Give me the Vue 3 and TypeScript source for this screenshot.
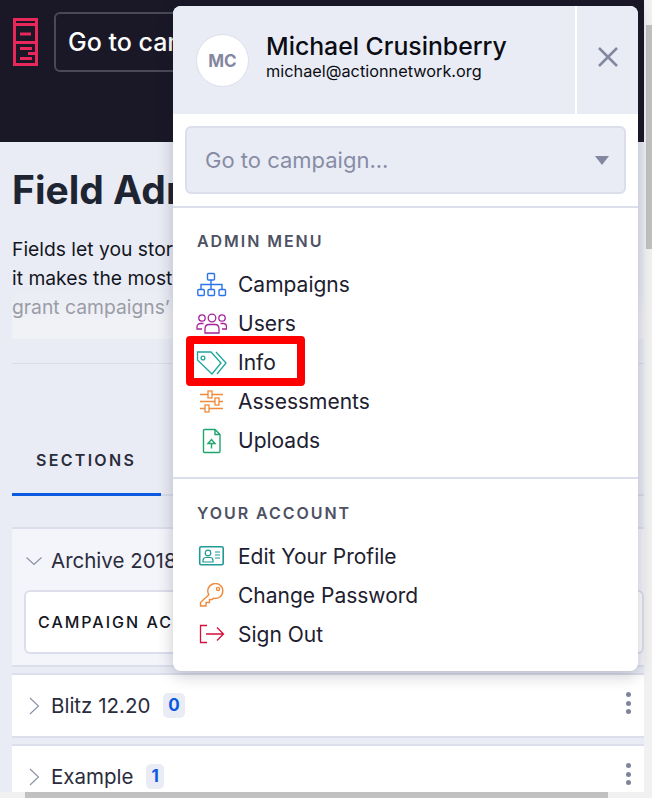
<script setup lang="ts">
interface Row { label: string; count: number }
const rows: Row[] = [
  { label: 'Blitz 12.20', count: 0 },
  { label: 'Example', count: 1 },
]
</script>

<template>
  <div class="screen">
    <div class="page">
      <header class="topbar">
        <svg class="logo" width="25" height="48" viewBox="0 0 25 48" fill="none" stroke="#e8275a" stroke-width="3">
          <rect x="1.500" y="1.500" width="22" height="45" />
          <path d="M1 6.500H24M7 16H18M1 24.500H24M7 30.500H19M15 35.500H24M7 40.500H19" />
        </svg>
        <div class="top-select">Go to campaign...</div>
      </header>
      <main class="content">
        <h1>Field Administration</h1>
        <div class="intro">
          <p>Fields let you store data about your campaigns,</p>
          <p>it makes the most of your information, and lets you</p>
          <p class="fade">grant campaigns’ access to the right data</p>
        </div>
        <hr class="rule" />
        <div class="tabs"><div class="tab">SECTIONS</div></div>
        <section class="acc open">
          <div class="acc-head">
            <svg class="chev" width="16" height="16" viewBox="0 0 16 16" fill="none"><path d="M.5 4.500L8 11.500L15.500 4.500" stroke="#8a8fa8" stroke-width="1.100" /></svg>
            <span class="acc-title">Archive 2018</span>
          </div>
          <div class="inner-card">CAMPAIGN ACTIONS</div>
        </section>
        <section v-for="r in rows" :key="r.label" class="acc">
          <div class="acc-head">
            <svg class="chev" width="16" height="18" viewBox="0 0 16 18" fill="none"><path d="M4 1L12.500 9L4 17" stroke="#8a8fa8" stroke-width="1.100" /></svg>
            <span class="acc-title">{{ r.label }}</span>
            <span class="badge">{{ r.count }}</span>
            <span class="kebab"><i></i><i></i><i></i></span>
          </div>
        </section>
      </main>
      <div class="hscroll"><div class="hthumb"></div></div>
    </div>
    <div class="vscroll"><div class="vthumb"></div></div>

    <aside class="panel">
      <div class="panel-head">
        <div class="user">
          <div class="avatar">MC</div>
          <div class="who">
            <div class="name">Michael Crusinberry</div>
            <div class="email">michael@actionnetwork.org</div>
          </div>
        </div>
        <button class="close" aria-label="Close">
          <svg width="20" height="20" viewBox="0 0 20 20" fill="none"><path d="M1 1L19 19M19 1L1 19" stroke="#83879f" stroke-width="2.500" /></svg>
        </button>
      </div>
      <div class="panel-select-wrap">
        <div class="panel-select">
          <span>Go to campaign...</span>
          <span class="caret"></span>
        </div>
      </div>
      <div class="menu-block first">
        <div class="menu-title">ADMIN MENU</div>
        <ul>
          <li>
            <svg width="32" height="26" viewBox="0 0 32 26" fill="none" stroke="#2a74ea" stroke-width="1.400">
              <rect x="12.500" y="1.500" width="7" height="6.500" rx="1" /><rect x="2.800" y="17.500" width="6.500" height="6" rx="1" /><rect x="13" y="17.500" width="6.500" height="6" rx="1" /><rect x="24" y="17.500" width="6.500" height="6" rx="1" />
              <path d="M16 8V17.500M6 17.500V12.500H27V17.500" />
            </svg>
            <span>Campaigns</span>
          </li>
          <li>
            <svg width="32" height="26" viewBox="0 0 32 26" fill="none" stroke="#a5249b" stroke-width="1.300">
              <circle cx="17" cy="7" r="3.800" /><circle cx="7" cy="7" r="3.200" /><circle cx="27" cy="7" r="3.200" />
              <path d="M10 22V18C10 15.500 11.500 13.500 14 13.500H20C22.500 13.500 24 15.500 24 18V22H10ZM8.500 12.500H5.500C3.500 12.500 2 14 2 16V18H7M25.500 12.500H28.500C30.500 12.500 31.500 14 31.500 16V18H27" />
            </svg>
            <span>Users</span>
          </li>
          <li class="hl">
            <svg width="32" height="26" viewBox="0 0 32 26" fill="none" stroke="#1fa59e" stroke-width="1.300">
              <path d="M2.500 2H16L26 13L17 24L2.500 10V2Z" /><circle cx="8" cy="8" r="1.900" /><path d="M21 2L31 13L22 24" />
            </svg>
            <span>Info</span>
          </li>
          <li>
            <svg width="32" height="26" viewBox="0 0 32 26" fill="none" stroke="#f08a3c" stroke-width="1.300">
              <path d="M5 5.500H28M5 12.500H28M5 19.500H28" /><rect x="13" y="2" width="4" height="7" fill="#fff" /><rect x="20" y="9" width="4" height="7" fill="#fff" /><rect x="10" y="16" width="4" height="7" fill="#fff" />
            </svg>
            <span>Assessments</span>
          </li>
          <li>
            <svg width="32" height="26" viewBox="0 0 32 26" fill="none" stroke="#1fa56e" stroke-width="1.400">
              <path d="M8.500 2.500Q8.500 1.500 9.500 1.500H20L25 6.500V23.500Q25 24.500 24 24.500H9.500Q8.500 24.500 8.500 23.500V2.500ZM20 1.500V6.500H25" /><path d="M16.500 20.500V15M13 15.500L16.500 11.500L20 15.500H13Z" />
            </svg>
            <span>Uploads</span>
          </li>
        </ul>
      </div>
      <div class="menu-block">
        <div class="menu-title">YOUR ACCOUNT</div>
        <ul>
          <li>
            <svg width="32" height="26" viewBox="0 0 32 26" fill="none" stroke="#1f9a94" stroke-width="1.200">
              <rect x="4.700" y="2.700" width="23.500" height="18" rx="1.500" stroke-width="1.600" /><circle cx="13" cy="9" r="2.800" /><path d="M8 18V16.500C8 14.500 9.500 13.500 11 13.500H15C16.500 13.500 18 14.500 18 16.500V18H8ZM20 8H25M20 11H25M20 14H25" />
            </svg>
            <span>Edit Your Profile</span>
          </li>
          <li>
            <svg width="32" height="26" viewBox="0 0 32 26" fill="none" stroke="#f08a3c" stroke-width="1.400">
              <path d="M13.800 11.700L5.500 19.500V23H11V19.500H14.500V16.500H17.500L18.300 15.200A7.500 7.500 0 1 0 13.800 11.700Z" /><circle cx="23" cy="6" r="1.600" />
            </svg>
            <span>Change Password</span>
          </li>
          <li>
            <svg width="32" height="26" viewBox="0 0 32 26" fill="none" stroke="#d8103a" stroke-width="1.300">
              <path d="M12 3.500H5.500V20.500H12M11 12H28M22 5.500L28.500 12L22 18.500" />
            </svg>
            <span>Sign Out</span>
          </li>
        </ul>
      </div>
    </aside>
  </div>
</template>

<style>
html, body { margin: 0; overflow: hidden; }
</style>

<style scoped>
.screen { position: relative; width: 652px; height: 798px; display: flex; overflow: hidden; font-family: Inter, Lato, sans-serif; color: #1d2030; background: #e9ecf4; }
.page { width: 644px; display: flex; flex-direction: column; height: 798px; }
.topbar { height: 142px; flex: none; background: #1a1827; display: flex; align-items: flex-start; padding: 12px 0 0 13px; box-sizing: border-box; overflow: hidden; }
.logo { margin-top: 6px; flex: none; }
.top-select { margin-left: 16px; width: 300px; height: 60px; flex: none; box-sizing: border-box; border: 2px solid #4a4955; border-radius: 6px; color: #fff; font-size: 25px; font-weight: 500; line-height: 56px; padding-left: 12px; white-space: nowrap; }
.content { flex: 1; min-height: 0; padding: 0 0 0 12px; overflow: hidden; }
h1 { margin: 25px 0 0; font-size: 39px; line-height: 46px; font-weight: 700; color: #1f2433; white-space: nowrap; }
.intro { margin-top: 18px; height: 108px; width: 632px; padding-top: 4px; box-sizing: border-box; background: linear-gradient(#e9ecf4 55%, #f1f2f6 85%); }
.intro p { margin: 0; font-size: 19.300px; line-height: 29px; color: #14161f; white-space: nowrap; }
.intro p.fade { color: #9a9ca6; }
.rule { margin: 24px 0 0; border: 0; border-top: 1px solid #d9dce8; }
.tabs { margin-top: 50px; height: 82px; box-sizing: border-box; border-bottom: 2px solid #d9dce8; width: 632px; }
.tab { width: 149px; height: 82px; box-sizing: border-box; border-bottom: 3px solid #0b5be0; font-size: 16px; font-weight: 600; letter-spacing: 2.300px; color: #2a2c3c; padding: 36px 0 0 24px; }
.acc { width: 632px; background: #fff; border-top: 2px solid #dcdfeb; border-bottom: 2px solid #dcdfeb; margin-top: 6px; box-sizing: border-box; height: 65px; }
.acc.open { margin-top: 31px; background: #f4f5fa; height: 140px; }
.acc-head { height: 61px; box-sizing: border-box; padding: 0 0 0 14px; display: flex; align-items: center; position: relative; }
.open .acc-head { padding-top: 2px; }
.chev { flex: none; }
.acc-title { margin-left: 9px; font-size: 20.500px; color: #2a2c3c; white-space: nowrap; }
.badge { margin-left: 13px; background: #e9ecf4; color: #0b5be0; font-weight: 700; font-size: 17px; border-radius: 5px; padding: 3px 5px; line-height: 19px; }
.kebab { position: absolute; right: 13px; top: 17px; display: flex; flex-direction: column; gap: 3.500px; }
.kebab i { width: 5px; height: 5px; border-radius: 50%; background: #7f849c; display: block; }
.inner-card { margin-left: 12px; width: 620px; height: 64px; box-sizing: border-box; background: #fff; border: 2px solid #dcdfeb; border-radius: 6px; font-size: 16px; font-weight: 500; letter-spacing: 2px; line-height: 60px; padding-left: 12px; color: #14161f; white-space: nowrap; overflow: hidden; }
.hscroll { height: 6px; flex: none; background: #f1f1f1; padding-left: 25px; }
.hthumb { width: 583px; height: 6px; background: #c1c1c1; }
.vscroll { width: 8px; flex: none; background: #f1f1f1; padding: 25px 0 0 2px; box-sizing: border-box; }
.vthumb { height: 224px; background: #c1c1c1; }
.panel { position: absolute; left: 173px; top: 6px; width: 465px; height: 665px; background: #fff; border-radius: 8px; box-shadow: 0 4px 16px rgba(20, 22, 50, .24); display: flex; flex-direction: column; overflow: hidden; }
.panel-head { height: 108px; flex: none; display: flex; background: #e9ecf4; }
.user { flex: 1; display: flex; align-items: flex-start; padding: 28px 0 0 23px; border-right: 2px solid #fff; }
.avatar { width: 53px; height: 53px; flex: none; border-radius: 50%; background: #fff; border: 1px solid #dcdfeb; box-sizing: border-box; display: flex; align-items: center; justify-content: center; font-size: 17px; font-weight: 700; color: #83879f; }
.who { margin-left: 17px; margin-top: -3px; }
.name { font-size: 24.800px; line-height: 30px; font-weight: 500; color: #0c0d14; white-space: nowrap; }
.email { font-size: 16.300px; line-height: 20px; color: #0c0d14; white-space: nowrap; }
.close { width: 61px; flex: none; background: none; border: 0; padding: 0 0 6px; display: flex; align-items: center; justify-content: center; }
.panel-select-wrap { height: 94px; flex: none; padding: 12px 12px 0; box-sizing: border-box; border-bottom: 2px solid #dcdfeb; }
.panel-select { height: 68px; box-sizing: border-box; background: #e9ecf4; border: 2px solid #dcdfeb; border-radius: 6px; display: flex; align-items: center; justify-content: space-between; padding: 0 15px 0 18px; color: #878ca6; font-size: 22px; }
.caret { width: 0; height: 0; border-left: 7px solid transparent; border-right: 7px solid transparent; border-top: 9px solid #83879f; }
.menu-block { padding: 24px 0 0 24px; flex: none; }
.menu-block.first { height: 271px; padding-top: 23px; box-sizing: border-box; border-bottom: 2px solid #dcdfeb; }
.menu-title { font-size: 16px; font-weight: 600; letter-spacing: 1.950px; line-height: 20px; color: #4d5163; }
ul { list-style: none; margin: 14px 0 0; padding: 0; }
li { height: 39px; display: flex; align-items: center; gap: 11px; font-size: 21px; color: #1d2030; margin-left: -2px; position: relative; }
li svg { flex: none; }
.hl::after { content: ""; position: absolute; left: -9px; top: -7px; width: 119px; height: 50px; box-sizing: border-box; border: 8px solid #f00; border-radius: 4px; pointer-events: none; }
</style>
